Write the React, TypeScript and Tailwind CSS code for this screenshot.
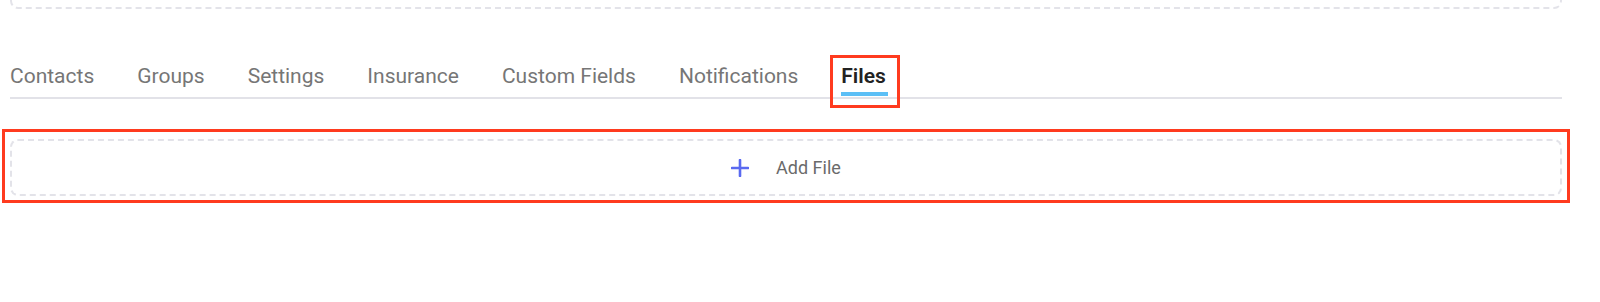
const tabs = ["Contacts", "Groups", "Settings", "Insurance", "Custom Fields", "Notifications", "Files"];

export default function App() {
  return (
    <div className="w-[1600px] h-[302px] overflow-hidden bg-white font-['Roboto',sans-serif]">
      <div className="ml-[10px] w-[1552px]">
        {/* previous section, cut off at the top */}
        <div className="mt-[-32px] h-[41px] rounded-lg border-2 border-dashed border-[#e3e3e9]" />

        {/* Tabs */}
        <div className="mt-[55px] flex items-start gap-[43px] border-b-2 border-[#e2e2e8] pb-[1px]">
          {tabs.map((t) => {
            const active = t === "Files";
            return (
              <div key={t} className="relative flex flex-col items-start">
                <span
                  className={
                    active
                      ? "text-[21px] leading-[24px] font-semibold text-[#222]"
                      : "text-[21px] leading-[24px] text-[#767676]"
                  }
                >
                  {t}
                </span>
                {active && (
                  <>
                    <div className="mt-[4px] h-[4px] w-[47px] bg-[#5bbff6]" />
                    <div className="absolute left-[-11px] right-[-12px] top-[-9px] bottom-[-12px] border-[3px] border-[#ff3b1f]" />
                  </>
                )}
              </div>
            );
          })}
        </div>

        {/* Add file */}
        <div className="relative mt-[40px]">
          <div className="flex h-[57px] items-center justify-center gap-[27px] rounded-lg border-2 border-dashed border-[#e3e3e9]">
            <svg width="18" height="18" viewBox="0 0 18 18" className="text-[#5a6af0]">
              <path d="M9 1v16M1 9h16" stroke="currentColor" strokeWidth="2.6" strokeLinecap="round" />
            </svg>
            <span className="text-[18px] text-[#6b6b6b]">Add File</span>
          </div>
          <div className="absolute left-[-8px] right-[-8px] top-[-10px] bottom-[-7px] border-[3px] border-[#ff3b1f]" />
        </div>
      </div>
    </div>
  );
}
